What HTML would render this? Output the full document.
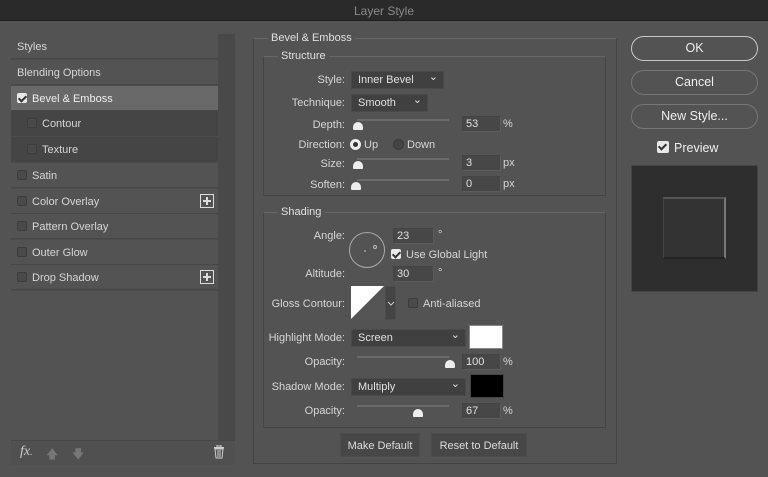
<!DOCTYPE html>
<html><head><style>
*{box-sizing:border-box;margin:0;padding:0}
body{width:768px;height:477px;background:#535353;font-family:"Liberation Sans",sans-serif;font-size:11px;color:#d6d6d6;position:relative;overflow:hidden}
.a{position:absolute}
.title{left:0;top:0;width:768px;height:21px;background:#2a2a2a;color:#8a8a8a;text-align:center;line-height:22px;font-size:12px;border-bottom:1px solid #1e1e1e}
.row{position:absolute;left:11px;width:207px;height:25px;border-bottom:1px solid #474747;background:#535353;line-height:27px;padding-left:6px}
.cb{display:inline-block;width:10px;height:10px;border:1px solid #3c3c3c;background:#4a4a4a;border-radius:2px;vertical-align:-1px;margin-right:5px}
.cbon{background:#e8e8e8;border-color:#e8e8e8;position:relative}
.cbon:after{content:"";position:absolute;left:2px;top:0px;width:3px;height:6px;border:solid #333;border-width:0 2px 2px 0;transform:rotate(45deg)}
.plus{position:absolute;right:4px;top:5px;width:14px;height:14px;border:1px solid #ddd;}
.plus:before{content:"";position:absolute;left:2px;top:5px;width:8px;height:2px;background:#ddd}
.plus:after{content:"";position:absolute;left:5px;top:2px;width:2px;height:8px;background:#ddd}
.lbl{position:absolute;text-align:right;width:100px;margin-top:1px}
.sel{position:absolute;height:18px;background:#404040;border:1px solid #4a4a4a;color:#e0e0e0;line-height:17px;padding-left:6px}
.sel:after{content:"⌄";position:absolute;right:5px;top:-3px;font-size:11px}
.inp{position:absolute;height:16px;background:#474747;border:1px solid #5c5c5c;border-color:#444 #5c5c5c #5c5c5c #444;color:#e0e0e0;line-height:15px;padding-left:3px}
.track{position:absolute;height:2px;background:#6a6a6a}
.thumb{position:absolute;width:10px;height:8px;background:#eee;border-radius:5px 5px 1px 1px}
.btn{position:absolute;border:1px solid #8a8a8a;border-radius:13px;text-align:center;color:#eee;font-size:12.5px}
.fs{position:absolute;border:1px solid #444;border-top-color:#666;}
</style></head><body>
<div class="a title">Layer Style</div>

<div class="a" style="left:11px;top:34px;width:224px;height:431px;background:#4c4c4c;border:1px solid #484848"></div>
<div class="a" style="left:218px;top:34px;width:16px;height:406px;background:#494949"></div>
<div class="row" style="top:34px">Styles</div>
<div class="row" style="top:60px">Blending Options</div>
<div class="row" style="top:86px;background:#696969;color:#eee"><span class="cb cbon"></span>Bevel &amp; Emboss</div>
<div class="row" style="top:111px;background:#454545;padding-left:16px;border-color:#454545"><span class="cb"></span>Contour</div>
<div class="row" style="top:137px;background:#454545;padding-left:16px"><span class="cb"></span>Texture</div>
<div class="row" style="top:163px"><span class="cb"></span>Satin</div>
<div class="row" style="top:189px"><span class="cb"></span>Color Overlay<span class="plus"></span></div>
<div class="row" style="top:214px"><span class="cb"></span>Pattern Overlay</div>
<div class="row" style="top:240px"><span class="cb"></span>Outer Glow</div>
<div class="row" style="top:265px"><span class="cb"></span>Drop Shadow<span class="plus"></span></div>
<div class="row" style="top:291px;height:149px;border:none"></div>
<div class="a" style="left:11px;top:440px;width:224px;height:25px;background:#505050;border-top:1px solid #474747"></div>
<div class="a" style="left:20px;top:444px;font-style:italic;font-family:'Liberation Serif',serif;font-size:14px;color:#ccc">fx<span style="font-size:9px">.</span></div>
<div class="a" style="left:46px;top:445px;color:#777;font-size:12px">🡅</div>
<div class="a" style="left:72px;top:445px;color:#777;font-size:12px">🡇</div>
<svg class="a" style="left:213px;top:445px" width="12" height="14"><rect x="1" y="2" width="10" height="1.5" fill="#ccc"/><rect x="4" y="0" width="4" height="2" fill="none" stroke="#ccc" stroke-width="1"/><path d="M2 4h8l-1 9H3z" fill="none" stroke="#ccc"/><path d="M5 5v7M7 5v7" stroke="#ccc"/></svg>

<div class="fs" style="left:253px;top:38px;width:364px;height:426px;border-color:#444;border-top:1px solid #666"></div>
<div class="a" style="left:268px;top:32px;background:#535353;padding:0 3px;color:#e0e0e0">Bevel &amp; Emboss</div>
<div class="fs" style="left:263px;top:56px;width:343px;height:140px"></div>
<div class="a" style="left:278px;top:50px;background:#535353;padding:0 3px;color:#e0e0e0">Structure</div>

<div class="lbl" style="left:245px;top:73px">Style:</div>
<div class="sel" style="left:351px;top:71px;width:93px">Inner Bevel</div>
<div class="lbl" style="left:245px;top:96px">Technique:</div>
<div class="sel" style="left:351px;top:94px;width:77px">Smooth</div>
<div class="lbl" style="left:245px;top:118px">Depth:</div>
<div class="track" style="left:357px;top:119px;width:92px"></div><div class="thumb" style="left:353px;top:122px"></div>
<div class="inp" style="left:462px;top:116px;width:39px">53</div><div class="a" style="left:503px;top:118px">%</div>
<div class="lbl" style="left:245px;top:138px">Direction:</div>
<div class="a" style="left:350px;top:139px;width:11px;height:11px;border-radius:50%;background:#eee;border:3px solid #eee"><div style="width:5px;height:5px;border-radius:50%;background:#333"></div></div>
<div class="a" style="left:364px;top:139px">Up</div>
<div class="a" style="left:393px;top:139px;width:11px;height:11px;border-radius:50%;background:#444;border:1px solid #3a3a3a"></div>
<div class="a" style="left:407px;top:139px">Down</div>
<div class="lbl" style="left:245px;top:157px">Size:</div>
<div class="track" style="left:357px;top:158px;width:92px"></div><div class="thumb" style="left:353px;top:161px"></div>
<div class="inp" style="left:462px;top:155px;width:39px">3</div><div class="a" style="left:503px;top:157px">px</div>
<div class="lbl" style="left:245px;top:178px">Soften:</div>
<div class="track" style="left:357px;top:179px;width:92px"></div><div class="thumb" style="left:351px;top:182px"></div>
<div class="inp" style="left:462px;top:176px;width:39px">0</div><div class="a" style="left:503px;top:178px">px</div>

<div class="fs" style="left:263px;top:212px;width:343px;height:216px"></div>
<div class="a" style="left:278px;top:206px;background:#535353;padding:0 3px;color:#e0e0e0">Shading</div>
<div class="lbl" style="left:245px;top:229px">Angle:</div>
<svg class="a" style="left:348px;top:231px" width="40" height="40"><circle cx="19" cy="19" r="17.5" fill="none" stroke="#aaa"/><circle cx="17" cy="20" r="0.8" fill="#ccc"/><circle cx="27" cy="16" r="1.5" fill="none" stroke="#bbb"/></svg>
<div class="inp" style="left:393px;top:228px;width:41px">23</div><div class="a" style="left:438px;top:229px">°</div>
<div class="a" style="left:391px;top:249px"><span class="cb cbon"></span>Use Global Light</div>
<div class="lbl" style="left:245px;top:267px">Altitude:</div>
<div class="inp" style="left:393px;top:266px;width:41px">30</div><div class="a" style="left:438px;top:267px">°</div>
<div class="lbl" style="left:245px;top:297px">Gloss Contour:</div>
<svg class="a" style="left:351px;top:286px" width="46" height="34"><rect x="0" y="0" width="34" height="34" fill="#555"/><path d="M0 0H33L0 33Z" fill="#fff"/><rect x="34" y="0" width="11" height="34" fill="#444" stroke="#555"/><path d="M37 16l3 3 3-3" fill="none" stroke="#ccc"/></svg>
<div class="a" style="left:408px;top:298px"><span class="cb"></span>Anti-aliased</div>
<div class="lbl" style="left:245px;top:331px">Highlight Mode:</div>
<div class="sel" style="left:351px;top:329px;width:115px">Screen</div>
<div class="a" style="left:469px;top:325px;width:34px;height:24px;background:#fff;border:1px solid #888"></div>
<div class="lbl" style="left:245px;top:355px">Opacity:</div>
<div class="track" style="left:357px;top:356px;width:92px"></div><div class="thumb" style="left:445px;top:360px"></div>
<div class="inp" style="left:462px;top:354px;width:39px">100</div><div class="a" style="left:503px;top:356px">%</div>
<div class="lbl" style="left:245px;top:380px">Shadow Mode:</div>
<div class="sel" style="left:351px;top:378px;width:115px">Multiply</div>
<div class="a" style="left:470px;top:374px;width:34px;height:24px;background:#000;border:1px solid #444"></div>
<div class="lbl" style="left:245px;top:404px">Opacity:</div>
<div class="track" style="left:357px;top:405px;width:92px"></div><div class="thumb" style="left:413px;top:409px"></div>
<div class="inp" style="left:462px;top:403px;width:39px">67</div><div class="a" style="left:503px;top:405px">%</div>

<div class="a" style="left:340px;top:433px;width:80px;height:24px;background:#474747;border:1px solid #4c4c4c;text-align:center;line-height:24px;color:#ddd">Make Default</div>
<div class="a" style="left:431px;top:433px;width:96px;height:24px;background:#474747;border:1px solid #4c4c4c;text-align:center;line-height:24px;color:#ddd">Reset to Default</div>

<div class="btn" style="left:631px;top:36px;width:127px;height:25px;line-height:23px;border-color:#c8c8c8;border-width:1.5px">OK</div>
<div class="btn" style="left:631px;top:70px;width:127px;height:25px;line-height:23px;border-color:#777">Cancel</div>
<div class="btn" style="left:631px;top:104px;width:127px;height:25px;line-height:23px;border-color:#777">New Style...</div>
<div class="a" style="left:657px;top:141px;font-size:12.5px;color:#eee"><span class="cb cbon" style="width:12px;height:12px"></span>Preview</div>
<div class="a" style="left:631px;top:165px;width:127px;height:127px;background:#2e2e2e;border:1px solid #444"></div>
<div class="a" style="left:663px;top:197px;width:63px;height:62px;background:#333;border-top:2px solid #555;border-left:1px solid #444;border-right:2px solid #777;border-bottom:2px solid #222"></div>
</body></html>
